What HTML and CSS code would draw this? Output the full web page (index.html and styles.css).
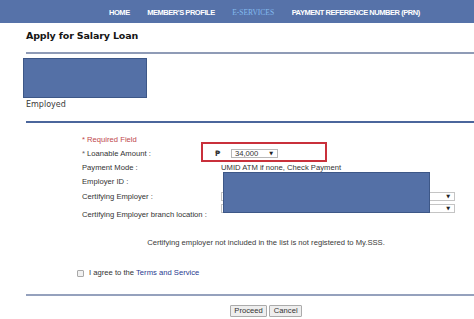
FILE: index.html
```html
<!DOCTYPE html>
<html>
<head>
<meta charset="utf-8">
<link rel="stylesheet" href="styles.css">
</head>
<body>
<nav class="topnav">
  <span class="nav-item">HOME</span>
  <span class="nav-item">MEMBER'S PROFILE</span>
  <span class="nav-item active">E-SERVICES</span>
  <span class="nav-item">PAYMENT REFERENCE NUMBER (PRN)</span>
</nav>
<main class="page">
  <h1 class="title">Apply for Salary Loan</h1>
  <div class="rule rule-light"></div>
  <div class="redact-name"></div>
  <div class="status">Employed</div>
  <div class="rule rule-dark"></div>

  <div class="form">
    <div class="label req">* Required Field</div>
    <div class="value"></div>

    <div class="label"><span class="ast">*</span> Loanable Amount :</div>
    <div class="value amount"><span class="peso">₱</span><span class="select select-amount"><span class="sel-text">34,000</span><span class="arrow">▼</span></span></div>

    <div class="label">Payment Mode :</div>
    <div class="value">UMID ATM if none, Check Payment</div>

    <div class="label">Employer ID :</div>
    <div class="value"></div>

    <div class="label">Certifying Employer :</div>
    <div class="value"><span class="select select-wide sel-cert"><span class="sel-text"></span><span class="arrow">▼</span></span></div>

    <div class="label label-branch">Certifying Employer branch location :</div>
    <div class="value"><span class="select select-wide sel-branch"><span class="sel-text"></span><span class="arrow">▼</span></span></div>

    <div class="annot-box"></div>
    <div class="redact-employer"></div>
  </div>

  <p class="note">Certifying employer not included in the list is not registered to My.SSS.</p>

  <div class="agree">
    <input type="checkbox" class="check">
    <span>I agree to the <a class="link">Terms and Service</a></span>
  </div>

  <div class="rule rule-light rule-bottom"></div>

  <div class="actions">
    <button class="btn">Proceed</button>
    <button class="btn">Cancel</button>
  </div>
</main>
</body>
</html>
```

FILE: styles.css
```css
html, body {
  margin: 0;
  padding: 0;
  background: #ffffff;
}

body {
  width: 474px;
  height: 319px;
  overflow: hidden;
  font-family: "Liberation Sans", Arial, sans-serif;
  font-size: 7.65px;
  color: #333333;
}

.topnav {
  box-sizing: border-box;
  height: 23px;
  padding: 3px 0 0 109px;
  display: flex;
  align-items: center;
  gap: 17.5px;
  background: #5672a9;
}

.nav-item {
  font-family: "Liberation Sans", Arial, sans-serif;
  font-weight: bold;
  font-size: 7.5px;
  line-height: 10px;
  letter-spacing: -0.45px;
  color: #ffffff;
  white-space: nowrap;
}

.nav-item.active {
  font-family: "Liberation Serif", "Times New Roman", serif;
  font-weight: normal;
  letter-spacing: 0;
  color: #84bbef;
}

.page {
  width: 448px;
  margin-left: 26px;
}

.title {
  margin: 0;
  padding-top: 6px;
  font-family: "DejaVu Sans", Verdana, sans-serif;
  font-weight: bold;
  font-size: 9.5px;
  line-height: 14px;
  letter-spacing: -0.15px;
  color: #151515;
}

.rule {
  height: 2px;
}

.rule-light {
  margin-top: 9px;
  background: #8f9bb6;
}

.rule-dark {
  margin-top: 10px;
  background: #4b669c;
}

.redact-name {
  box-sizing: border-box;
  margin: 4px 0 0 -3px;
  width: 124px;
  height: 40px;
  background: #5470a6;
  border: 1px solid #3d5787;
}

.status {
  font-family: "DejaVu Sans", Verdana, sans-serif;
  font-size: 8px;
  line-height: 13px;
  color: #3a3a3a;
}

.form {
  position: relative;
  margin-top: 10px;
  padding-left: 56px;
  display: grid;
  grid-template-columns: 139px 1fr;
  grid-template-rows: 14px 14px 13.5px 15px 13px 18px;
}

.label {
  line-height: 14px;
  white-space: nowrap;
  color: #333333;
}

.label.req {
  color: #c0484d;
}

.ast {
  color: #666666;
}

.label-branch {
  padding-top: 5px;
}

.value {
  line-height: 14px;
  white-space: nowrap;
  color: #333333;
}

.amount {
  display: flex;
  align-items: flex-start;
  margin-left: -6px;
}

.peso {
  font-family: "DejaVu Sans", sans-serif;
  font-weight: bold;
  font-size: 7.5px;
  line-height: 14px;
  color: #333333;
  width: 16px;
}

.select {
  box-sizing: border-box;
  display: flex;
  align-items: center;
  justify-content: space-between;
  height: 9px;
  border: 1px solid #c4c4c4;
  background: #ffffff;
  padding: 0 4px 0 3px;
  line-height: 7px;
}

.select-amount {
  margin-top: 2px;
  width: 47px;
  border-color: #b8b8b8;
}

.select-wide {
  width: 234px;
}

.sel-cert {
  margin-top: 2px;
}

.sel-branch {
  margin-top: 1.5px;
}

.sel-text {
  color: #333333;
}

.arrow {
  font-family: "DejaVu Sans", sans-serif;
  font-size: 5px;
  color: #222222;
}

.annot-box {
  position: absolute;
  box-sizing: border-box;
  left: 175px;
  top: 9px;
  width: 126px;
  height: 20px;
  border: 2px solid #c9303b;
}

.redact-employer {
  position: absolute;
  box-sizing: border-box;
  left: 197px;
  top: 39px;
  width: 207px;
  height: 41px;
  background: #5470a6;
  border: 1px solid #3d5787;
}

.note {
  margin: 15px 0 0 0;
  padding-left: 32px;
  text-align: center;
  line-height: 14px;
  color: #3a3a3a;
}

.agree {
  margin-top: 16.5px;
  padding-left: 51px;
  display: flex;
  align-items: center;
  gap: 5px;
  line-height: 14px;
  color: #333333;
}

.check {
  appearance: none;
  -webkit-appearance: none;
  box-sizing: border-box;
  margin: 0;
  width: 7px;
  height: 7px;
  border: 1px solid #a9a9a9;
  border-radius: 1px;
  background: #f1f1f1;
  position: relative;
  top: 0.5px;
}

.link {
  color: #2a3b8f;
  text-decoration: none;
}

.rule-bottom {
  margin-top: 14px;
  background: #95a1bd;
}

.actions {
  margin-top: 9px;
  padding-left: 32px;
  display: flex;
  justify-content: center;
  gap: 2px;
}

.btn {
  box-sizing: border-box;
  height: 12px;
  margin: 0;
  padding: 0 3.5px;
  font-family: "Liberation Sans", Arial, sans-serif;
  font-size: 7.65px;
  line-height: 10px;
  color: #333333;
  background: #eeeeee;
  border: 1px solid #ababab;
  border-radius: 1px;
}
```
